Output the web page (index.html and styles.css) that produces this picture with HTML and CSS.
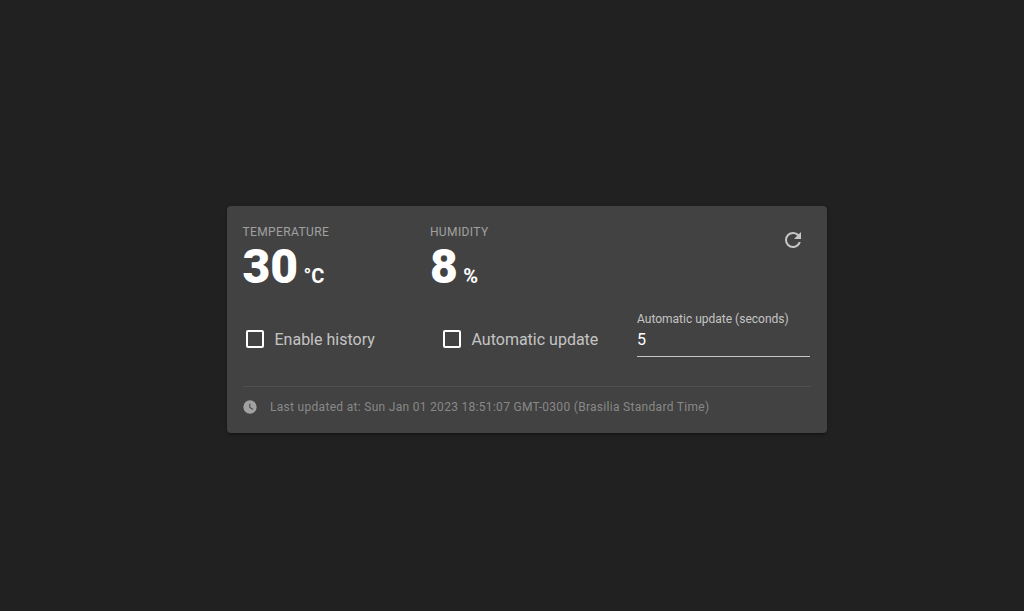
FILE: index.html
```html
<!DOCTYPE html>
<html lang="en">
<head>
<meta charset="utf-8">
<title>Sensor</title>
<link rel="stylesheet" href="styles.css">
</head>
<body>
<main class="card">
  <section class="stats">
    <div class="stat">
      <div class="stat-label">Temperature</div>
      <div class="stat-value">30<span class="unit">°C</span></div>
    </div>
    <div class="stat">
      <div class="stat-label">Humidity</div>
      <div class="stat-value">8<span class="unit">%</span></div>
    </div>
    <button class="refresh" type="button" aria-label="Refresh">
      <svg viewBox="0 0 24 24" class="icon24"><path d="M17.65,6.35C16.2,4.9 14.21,4 12,4A8,8 0 0,0 4,12A8,8 0 0,0 12,20C15.73,20 18.84,17.45 19.73,14H17.65C16.83,16.33 14.61,18 12,18A6,6 0 0,1 6,12A6,6 0 0,1 12,6C13.66,6 15.14,6.69 16.22,7.78L13,11H20V4L17.65,6.35Z"/></svg>
    </button>
  </section>
  <section class="controls">
    <label class="check check-history">
      <svg viewBox="0 0 24 24" class="icon24 box"><path d="M19,3H5C3.89,3 3,3.89 3,5V19A2,2 0 0,0 5,21H19A2,2 0 0,0 21,19V5C21,3.89 20.1,3 19,3M19,5V19H5V5H19Z"/></svg>
      <span>Enable history</span>
    </label>
    <label class="check check-auto">
      <svg viewBox="0 0 24 24" class="icon24 box"><path d="M19,3H5C3.89,3 3,3.89 3,5V19A2,2 0 0,0 5,21H19A2,2 0 0,0 21,19V5C21,3.89 20.1,3 19,3M19,5V19H5V5H19Z"/></svg>
      <span>Automatic update</span>
    </label>
    <div class="field">
      <div class="field-label">Automatic update (seconds)</div>
      <div class="field-value">5</div>
    </div>
  </section>
  <footer class="foot">
    <svg viewBox="0 0 24 24" class="clock"><path d="M12,2A10,10 0 0,0 2,12A10,10 0 0,0 12,22A10,10 0 0,0 22,12A10,10 0 0,0 12,2M16.2,16.2L11,13V7H12.5V12.2L17,14.9L16.2,16.2Z"/></svg>
    <span>Last updated at: Sun Jan 01 2023 18:51:07 GMT-0300 (Brasilia Standard Time)</span>
  </footer>
</main>
</body>
</html>
```
FILE: styles.css
```css
* { box-sizing: border-box; }
html, body { margin: 0; height: 100%; }
body {
  background: #212121;
  font-family: Roboto, "Liberation Sans", sans-serif;
  padding: 206px 0 0 227px;
  overflow: hidden;
}
.card {
  width: 600px;
  height: 227px;
  background: #424242;
  border-radius: 4px;
  box-shadow: 0 3px 1px -2px rgba(0,0,0,.2), 0 2px 2px 0 rgba(0,0,0,.14), 0 1px 5px 0 rgba(0,0,0,.12);
  padding: 16px 16px 0;
}
.stats { display: flex; height: 74px; position: relative; padding-top: 1px; margin-left: -.6px; }
.stat { width: 187.5px; }
.stat-label {
  font-size: 12px;
  line-height: 18px;
  letter-spacing: .4px;
  text-transform: uppercase;
  color: rgba(255,255,255,.5);
}
.stat-value {
  font-size: 48px;
  font-weight: 900;
  line-height: 52px;
  color: #fff;
}
.unit { font-size: 20px; font-weight: 700; margin-left: 5.5px; }
.refresh {
  position: absolute;
  right: 6.5px;
  top: 6px;
  width: 24px;
  height: 24px;
  padding: 0;
  border: 0;
  background: none;
  fill: rgba(255,255,255,.7);
}
.icon24 { width: 24px; height: 24px; display: block; }
.controls { display: flex; height: 90px; position: relative; }
.check {
  display: flex;
  align-items: center;
  gap: 8px;
  height: 24px;
  margin-top: 31px;
  font-size: 16px;
  color: rgba(255,255,255,.7);
}
.check-history { width: 197px; margin-left: -.5px; }
.check-auto { width: 197.5px; }
.box { fill: #fff; }
.field { width: 173px; height: 45px; margin-top: 16px; border-bottom: 1px solid rgba(255,255,255,.7); }
.field-label { font-size: 12px; line-height: 14px; color: rgba(255,255,255,.7); }
.field-value { font-size: 16px; line-height: 24px; margin-top: 2px; color: #fff; }
.foot {
  border-top: 1px solid rgba(255,255,255,.08);
  height: 40px;
  display: flex;
  align-items: center;
  gap: 12px;
  font-size: 12px;
  letter-spacing: .3px;
  color: rgba(255,255,255,.38);
}
.clock { width: 16px; height: 16px; margin-left: -1px; fill: rgba(255,255,255,.5); flex: none; }
```
